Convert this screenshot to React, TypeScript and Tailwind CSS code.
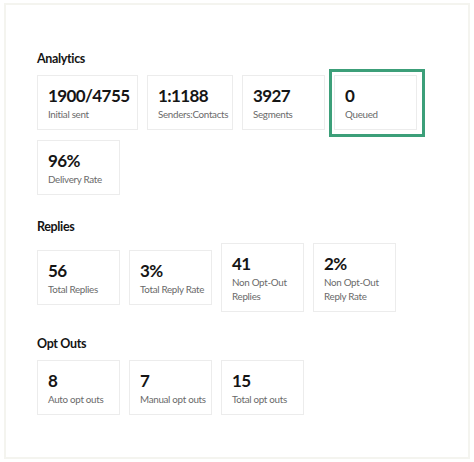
import React from "react";

type Stat = { value: string; label: string; w: string; highlight?: boolean };

function Card({ s }: { s: Stat }) {
  return (
    <div className={`relative ${s.w} shrink-0 border border-[#ececec] bg-white pl-[10px] pr-[2px] py-[8.5px]`}>
      {s.highlight && (
        <span className="pointer-events-none absolute -left-[6px] -right-[9px] -top-[7px] -bottom-[8px] border-[3px] border-[#3c9f79]" />
      )}
      <div className="text-[17px] leading-[22px] font-bold tracking-[-0.6px] text-[#151515]">{s.value}</div>
      <div className="text-[9.8px] leading-[14px] tracking-[-0.3px] text-[#6a6a6a]">{s.label}</div>
    </div>
  );
}

function Section({ title, rows, first }: { title: string; rows: Stat[][]; first?: boolean }) {
  return (
    <div className={first ? "" : "mt-[24px]"}>
      <h2 className="text-[12.5px] leading-[16px] font-bold tracking-[-0.35px] text-[#141414] mb-[8px]">{title}</h2>
      <div className="flex flex-col gap-[10px]">
        {rows.map((r, i) => (
          <div key={i} className="flex items-center gap-[9px]">
            {r.map((s) => (
              <Card key={s.label} s={s} />
            ))}
          </div>
        ))}
      </div>
    </div>
  );
}

export default function App() {
  return (
    <div className="w-[474px] h-[462px] bg-white pt-[3px] pl-[4px]" style={{ fontFamily: "Lato, 'Noto Sans', sans-serif" }}>
      <div className="w-[466px] h-[456px] border-2 border-[#f4f4ef] pl-[31px] pt-[46px]">
        <Section
          first
          title="Analytics"
          rows={[
            [
              { value: "1900/4755", label: "Initial sent", w: "w-[101px]" },
              { value: "1:1188", label: "Senders:Contacts", w: "w-[86px]" },
              { value: "3927", label: "Segments", w: "w-[83px]" },
              { value: "0", label: "Queued", w: "w-[83px]", highlight: true },
            ],
            [{ value: "96%", label: "Delivery Rate", w: "w-[83px]" }],
          ]}
        />
        <Section
          title="Replies"
          rows={[
            [
              { value: "56", label: "Total Replies", w: "w-[83px]" },
              { value: "3%", label: "Total Reply Rate", w: "w-[83px]" },
              { value: "41", label: "Non Opt-Out Replies", w: "w-[83px]" },
              { value: "2%", label: "Non Opt-Out Reply Rate", w: "w-[83px]" },
            ],
          ]}
        />
        <Section
          title="Opt Outs"
          rows={[
            [
              { value: "8", label: "Auto opt outs", w: "w-[83px]" },
              { value: "7", label: "Manual opt outs", w: "w-[83px]" },
              { value: "15", label: "Total opt outs", w: "w-[83px]" },
            ],
          ]}
        />
      </div>
    </div>
  );
}
